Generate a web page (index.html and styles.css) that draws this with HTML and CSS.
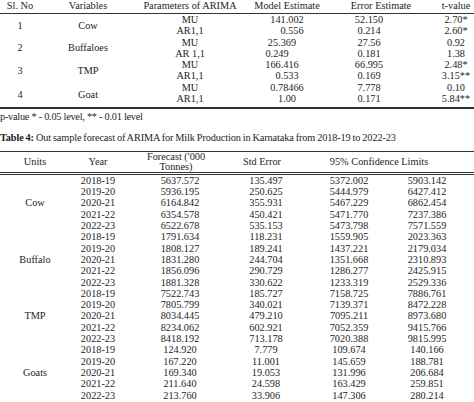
FILE: index.html
```html
<!DOCTYPE html>
<html>
<head>
<meta charset="utf-8">
<link rel="stylesheet" href="styles.css">
</head>
<body>
<table class="t3">
  <colgroup>
    <col class="a1"><col class="a2"><col class="a3"><col class="a4"><col class="a5"><col class="a6">
  </colgroup>
  <thead>
    <tr><th>Sl. No</th><th>Variables</th><th>Parameters of ARIMA</th><th>Model Estimate</th><th>Error Estimate</th><th class="tv">t-value</th></tr>
  </thead>
  <tbody>
    <tr><td rowspan="2">1</td><td rowspan="2">Cow</td><td>MU</td><td>141.002</td><td class="err">52.150</td><td class="tv">2.70*</td></tr>
    <tr><td>AR1,1</td><td class="sh">0.556</td><td class="err">0.214</td><td class="tv">2.60*</td></tr>
    <tr><td rowspan="2">2</td><td rowspan="2">Buffaloes</td><td>MU</td><td class="lf">25.369</td><td class="err">27.56</td><td class="tv">0.92</td></tr>
    <tr><td>AR 1,1</td><td class="lf2">0.249</td><td class="err">0.181</td><td class="tv">1.38</td></tr>
    <tr><td rowspan="2">3</td><td rowspan="2">TMP</td><td>MU</td><td class="lf">166.416</td><td class="err">66.995</td><td class="tv">2.48*</td></tr>
    <tr><td>AR1,1</td><td>0.533</td><td class="err">0.169</td><td class="tv">3.15**</td></tr>
    <tr><td rowspan="2">4</td><td rowspan="2">Goat</td><td>MU</td><td>0.78466</td><td class="err">7.778</td><td class="tv">0.10</td></tr>
    <tr class="last"><td>AR1,1</td><td>1.00</td><td class="err">0.171</td><td class="tv">5.84**</td></tr>
  </tbody>
</table>
<p class="note">p-value * - 0.05 level, ** - 0.01 level</p>
<p class="caption"><b>Table 4:</b> Out sample forecast of ARIMA for Milk Production in Karnataka from 2018-19 to 2022-23</p>
<table class="t4">
  <colgroup>
    <col class="b1"><col class="b2"><col class="b3"><col class="b4"><col class="b5"><col class="b6">
  </colgroup>
  <thead>
    <tr><th>Units</th><th>Year</th><th class="fc">Forecast ('000<br>Tonnes)</th><th class="se">Std Error</th><th colspan="2" class="cl">95% Confidence Limits</th></tr>
  </thead>
  <tbody>
    <tr><td rowspan="5">Cow</td><td>2018-19</td><td>5637.572</td><td>135.497</td><td>5372.002</td><td class="up">5903.142</td></tr>
    <tr><td>2019-20</td><td>5936.195</td><td>250.625</td><td>5444.979</td><td class="up">6427.412</td></tr>
    <tr><td>2020-21</td><td>6164.842</td><td>355.931</td><td>5467.229</td><td class="up">6862.454</td></tr>
    <tr><td>2021-22</td><td>6354.578</td><td>450.421</td><td>5471.770</td><td class="up">7237.386</td></tr>
    <tr><td>2022-23</td><td>6522.678</td><td>535.153</td><td>5473.798</td><td class="up">7571.559</td></tr>
    <tr><td rowspan="5">Buffalo</td><td>2018-19</td><td>1791.634</td><td>118.231</td><td>1559.905</td><td class="up">2023.363</td></tr>
    <tr><td>2019-20</td><td>1808.127</td><td>189.241</td><td>1437.221</td><td class="up">2179.034</td></tr>
    <tr><td>2020-21</td><td>1831.280</td><td>244.704</td><td>1351.668</td><td class="up">2310.893</td></tr>
    <tr><td>2021-22</td><td>1856.096</td><td>290.729</td><td>1286.277</td><td class="up">2425.915</td></tr>
    <tr><td>2022-23</td><td>1881.328</td><td>330.622</td><td>1233.319</td><td class="up">2529.336</td></tr>
    <tr><td rowspan="5">TMP</td><td>2018-19</td><td>7522.743</td><td>185.727</td><td>7158.725</td><td class="up">7886.761</td></tr>
    <tr><td>2019-20</td><td>7805.799</td><td>340.021</td><td>7139.371</td><td class="up">8472.228</td></tr>
    <tr><td>2020-21</td><td>8034.445</td><td>479.210</td><td>7095.211</td><td class="up">8973.680</td></tr>
    <tr><td>2021-22</td><td>8234.062</td><td>602.921</td><td>7052.359</td><td class="up">9415.766</td></tr>
    <tr><td>2022-23</td><td>8418.192</td><td>713.178</td><td>7020.388</td><td class="up">9815.995</td></tr>
    <tr><td rowspan="5">Goats</td><td>2018-19</td><td>124.920</td><td>7.779</td><td>109.674</td><td class="up">140.166</td></tr>
    <tr><td>2019-20</td><td>167.220</td><td>11.001</td><td>145.659</td><td class="up">188.781</td></tr>
    <tr><td>2020-21</td><td>169.340</td><td>19.053</td><td>131.996</td><td class="up">206.684</td></tr>
    <tr><td>2021-22</td><td>211.640</td><td>24.598</td><td>163.429</td><td class="up">259.851</td></tr>
    <tr><td>2022-23</td><td>213.760</td><td>33.906</td><td>147.306</td><td class="up">280.214</td></tr>
  </tbody>
</table>
</body>
</html>
```
FILE: styles.css
```css
html, body {
  margin: 0;
  padding: 0;
  background: #ffffff;
  overflow: hidden;
}
body {
  width: 474px;
  height: 402px;
  font-family: "Liberation Serif", "Times New Roman", serif;
  font-size: 10.3px;
  color: #1e1e1e;
}
table {
  width: 474px;
  border-collapse: collapse;
  table-layout: fixed;
}
th, td {
  padding: 0;
  font-weight: normal;
  text-align: center;
  vertical-align: middle;
  white-space: nowrap;
}

/* Table 3 */
.a1 { width: 40px; }
.a2 { width: 96px; }
.a3 { width: 108px; }
.a4 { width: 86px; }
.a5 { width: 102px; }
.a6 { width: 42px; }
.t3 th {
  line-height: 11px;
  padding-bottom: 2px;
  border-bottom: 1.4px solid #333;
}
.t3 td {
  line-height: 11.3px;
  height: 11.3px;
}
.t3 .tv { padding-left: 6px; }
.t3 td.err { padding-right: 24px; }
.t3 td.sh { padding-left: 10px; }
.t3 td.lf { padding-right: 10px; }
.t3 td.lf2 { padding-right: 20px; }
.t3 tr.last td { padding-bottom: 3px; }
.t3 tbody tr.last { border-bottom: 2px solid #333; }

.note {
  margin: 2px 0 0;
  line-height: 12px;
  letter-spacing: -0.25px;
}
.caption {
  margin: 8.5px 0 0;
  line-height: 12px;
  letter-spacing: -0.12px;
  word-spacing: -0.5px;
  white-space: nowrap;
}

/* Table 4 */
.t4 { margin-top: 7px; border-top: 1.5px solid #333; }
.b1 { width: 70px; }
.b2 { width: 56px; }
.b3 { width: 108px; }
.b4 { width: 64px; }
.b5 { width: 102px; }
.b6 { width: 74px; }
.t4 th {
  line-height: 10px;
  height: 20px;
  border-bottom: 3px double #333;
}
.t4 th.fc { padding-right: 8px; }
.t4 th.se { padding-right: 8px; }
.t4 th.cl { padding-right: 14px; }
.t4 td {
  line-height: 11.3px;
  height: 11.3px;
}
.t4 td.up { padding-right: 20px; }
```
